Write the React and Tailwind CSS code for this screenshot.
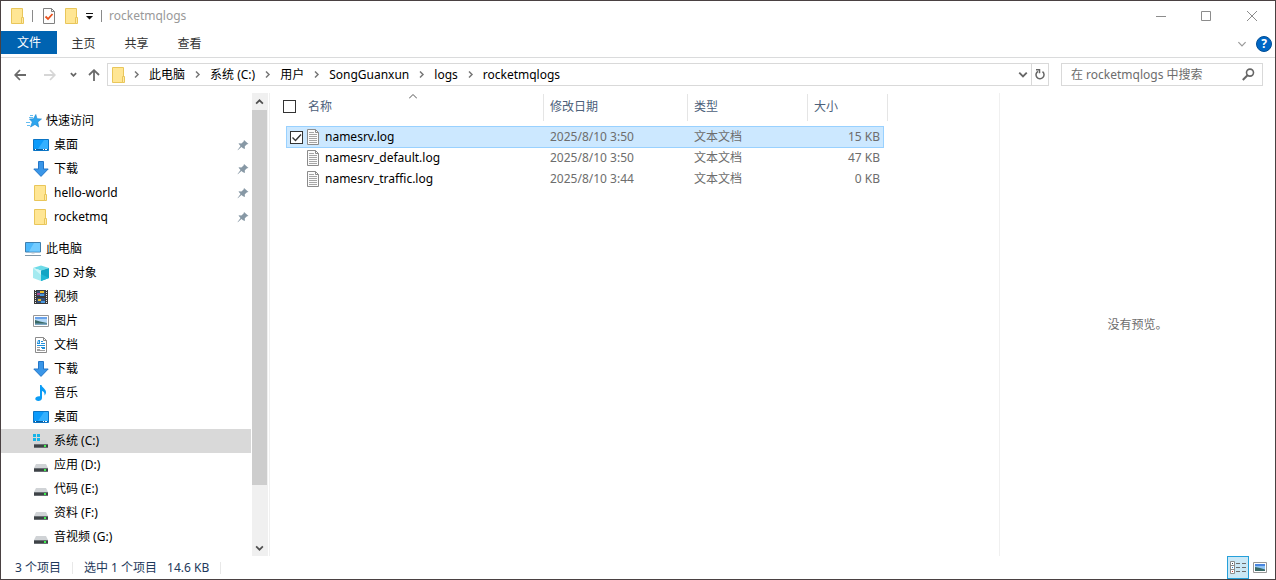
import React, { useState } from "react";
import clsx from "clsx";

const FolderIcon = () => (
    <svg className="w-4 h-4 shrink-0" viewBox="0 0 16 16" aria-hidden="true">
        <path d="M1.5 .5h11v15h-11z" fill="#ffe694" stroke="#e9c65a" />
        <path d="M11.5 9.5h2v6h-2z" fill="#ffeaa6" stroke="#e9c65a" />
    </svg>
);

const StarIcon = () => (
    <svg className="w-4 h-4 shrink-0" viewBox="0 0 16 16" aria-hidden="true">
        <path d="M9.800 1.500l1.200 4.200 4.500.3-3.700 3 .9 5-3.700-2.600-4.500 2.600 1.800-5L3.500 6l4-.2z" fill="#2ea5ee" stroke="#1a86d0" strokeWidth=".6" />
        <path d="M3 4.500h4M0 9.500h4M1 12.500h3M4 2.500h3" stroke="#65bdf0" />
    </svg>
);

const DesktopIcon = () => (
    <svg className="w-4 h-4 shrink-0" viewBox="0 0 16 16" aria-hidden="true">
        <path d="M.5 2.500h15v11H.5z" fill="#0c9bfb" stroke="#0b74c4" />
        <path d="M11 3h4v9H5z" fill="#33b0ff" />
        <path d="M1 12.500h14" stroke="#0b5c9c" />
        <path d="M2 12.500h1M10 12.500h1M12 12.500h2" stroke="#fff" />
    </svg>
);

const DownloadIcon = () => (
    <svg className="w-4 h-4 shrink-0" viewBox="0 0 16 16" aria-hidden="true">
        <path d="M5.500 .5h5v7.500h4.700L8 15.400.8 8h4.700z" fill="#3a96e8" stroke="#2376c8" />
    </svg>
);

const ComputerIcon = () => (
    <svg className="w-4 h-4 shrink-0" viewBox="0 0 16 16" aria-hidden="true">
        <path d="M.5 1.500h15v9.500H.5z" fill="#4cb8fc" stroke="#3f7fae" />
        <path d="M9 2h6v8.500H4z" fill="#72cbff" />
        <path d="M6.500 12h3" stroke="#b4c0c8" />
        <path d="M0 14.500h16" stroke="#8298a8" />
    </svg>
);

const CubeIcon = () => (
    <svg className="w-4 h-4 shrink-0" viewBox="0 0 16 16" aria-hidden="true">
        <path d="M0 3l8-2.600L16 3 8 5.600z" fill="#6edbe8" />
        <path d="M0 3l8 2.600V16l-8-3z" fill="#a4eaf0" />
        <path d="M0 3l8 2.600V10z" fill="#d0f6f8" />
        <path d="M16 3L8 5.600V16l8-3z" fill="#12a5c4" />
        <path d="M8 16V9l8 4z" fill="#1fb8d4" />
    </svg>
);

const VideoIcon = () => (
    <svg className="w-4 h-4 shrink-0" viewBox="0 0 16 16" aria-hidden="true">
        <path d="M1 1h14v14H1z" fill="#3a3a3a" />
        <path d="M2.500 1v14M13.500 1v14" stroke="#e6e6e6" strokeDasharray="1 1" />
        <path d="M4 2h8v5H4zM4 9h8v5H4z" fill="#33507c" />
        <path d="M7 2h4v2H7zM5 10h3v2H5z" fill="#e9bd2f" />
        <path d="M4 4h3v2H4z" fill="#b04a8c" />
        <path d="M7 5h4v2H7zM8 12h4v2H8z" fill="#4c9ae0" />
    </svg>
);

const PictureIcon = () => (
    <svg className="w-4 h-4 shrink-0" viewBox="0 0 16 16" aria-hidden="true">
        <path d="M.5 2.500h15v11H.5z" fill="#fff" stroke="#979797" />
        <path d="M2 4h12v8H2z" fill="#b4d8f7" />
        <path d="M2 4h12v2H2z" fill="#6ba3ea" />
        <path d="M2 7l5 1.500L14 10v1H2z" fill="#3a6a66" />
        <path d="M2 10.500h12V12H2z" fill="#7ba7c4" />
    </svg>
);

const DocumentIcon = () => (
    <svg className="w-4 h-4 shrink-0" viewBox="0 0 16 16" aria-hidden="true">
        <path d="M2.500 .5h8l3 3v12h-11z" fill="#fff" stroke="#8b8b8b" />
        <path d="M10.500 .5v3h3" fill="none" stroke="#8b8b8b" />
        <path d="M4 6.500h3M8 4.500h2M8 6.500h4M4 8.500h8M8 10.500h4M9 11.500h3" stroke="#1f90dc" />
        <path d="M5.500 3l-1 3.500M6.500 3v4" stroke="#1f90dc" />
        <path d="M4 10.500h3M4 12.500h3M4 13.500h8" stroke="#a0a0a0" />
    </svg>
);

const MusicIcon = () => (
    <svg className="w-4 h-4 shrink-0" viewBox="0 0 16 16" aria-hidden="true">
        <path d="M7 0h1.500c.4 2.600 4.500 4 4.500 7 0 1.500-.6 2.700-1.500 3.500.5-2.500-.8-4-2.500-4.600V13c0 1.800-1.700 3-3.700 3-1.800 0-3-.9-3-2.200C2.300 12 4.300 11 7 11.300z" fill="#0b9cf5" />
    </svg>
);

const DriveIcon = ({ system }) => (
    <svg className="w-4 h-4 shrink-0" viewBox="0 0 16 16" aria-hidden="true">
        <path d="M3 7h10l2 4H1z" fill="#d0d3d6" />
        <path d="M1 11h14v4H1z" fill="#3e4246" />
        <path d="M1 11.500h14M1 14.500h14" stroke="#6a6f74" />
        <path d="M11 12h2v2h-2z" fill="#3df04e" />
        {system && (
            <>
                <path d="M0 0h8v8H0z" fill="#d9d9d9" />
                <path d="M0 1h3v3H0zM4 1h3v3H4zM0 5h3v3H0zM4 5h3v3H4z" fill="#16b4e8" />
            </>
        )}
    </svg>
);

const TextFileIcon = () => (
    <svg className="w-4 h-4 shrink-0" viewBox="0 0 16 16" aria-hidden="true">
        <path d="M1.500 .5h8l3 3v12h-11z" fill="#fbfbfb" stroke="#8b8b8b" />
        <path d="M9.500 .5v3h3" fill="none" stroke="#8b8b8b" />
        <path d="M3 3.500h5M3 5.500h8M3 7.500h8M3 9.500h8M3 11.500h8M3 13.500h8" stroke="#a5a5a5" />
    </svg>
);

const PinIcon = () => (
    <svg className="w-3 h-3 shrink-0" viewBox="0 0 12 12" aria-hidden="true">
        <path d="M7 1l4.500 4-1.500.3-2.200 2 .1 2.700L6 9.200 4.400 7.900.8 11.300.6 10.900 3.500 7 2 5.300l-.4-1 2.800.2L6.600 2.400z" fill="#8798a5" />
    </svg>
);

const CheckDocIcon = () => (
    <svg className="w-4 h-4 shrink-0" viewBox="0 0 16 16" aria-hidden="true">
        <path d="M2.500 .5h8l3 3v12h-11z" fill="#fdfdfd" stroke="#808080" />
        <path d="M10.500 .5v3h3" fill="none" stroke="#808080" />
        <path d="M4.500 8.500l2.500 2.500 4.500-5" fill="none" stroke="#e8501c" strokeWidth="1.800" />
    </svg>
);

const Chevron = ({ className, d = "M1 1l3 3 3-3" }) => (
    <svg className={clsx("shrink-0", className)} viewBox="0 0 8 5" fill="none" stroke="currentColor" aria-hidden="true">
        <path d={d} />
    </svg>
);

// Square checkbox with a thin tick laid over the native input
const Checkbox = ({ label, className, ...props }) => (
    <span className={clsx("relative block w-[13px] h-[13px] shrink-0", className)}>
        <input type="checkbox" aria-label={label} className="peer block appearance-none w-full h-full border border-[#333] bg-white" {...props} />
        <svg className="absolute inset-0 hidden peer-checked:block pointer-events-none" viewBox="0 0 13 13" fill="none" stroke="#333" strokeWidth="1.400" aria-hidden="true">
            <path d="M2.500 6.500l3 3 5.500-6" />
        </svg>
    </span>
);

const quickAccess = [
    { name: "桌面", icon: <DesktopIcon /> },
    { name: "下载", icon: <DownloadIcon /> },
    { name: "hello-world", icon: <FolderIcon /> },
    { name: "rocketmq", icon: <FolderIcon /> },
];

const thisPC = [
    { name: "3D 对象", icon: <CubeIcon /> },
    { name: "视频", icon: <VideoIcon /> },
    { name: "图片", icon: <PictureIcon /> },
    { name: "文档", icon: <DocumentIcon /> },
    { name: "下载", icon: <DownloadIcon /> },
    { name: "音乐", icon: <MusicIcon /> },
    { name: "桌面", icon: <DesktopIcon /> },
    { name: "系统 (C:)", icon: <DriveIcon system />, active: true },
    { name: "应用 (D:)", icon: <DriveIcon /> },
    { name: "代码 (E:)", icon: <DriveIcon /> },
    { name: "资料 (F:)", icon: <DriveIcon /> },
    { name: "音视频 (G:)", icon: <DriveIcon /> },
];

const crumbs = ["此电脑", "系统 (C:)", "用户", "SongGuanxun", "logs", "rocketmqlogs"];

const files = [
    { name: "namesrv.log", date: "2025/8/10 3:50", type: "文本文档", size: "15 KB" },
    { name: "namesrv_default.log", date: "2025/8/10 3:50", type: "文本文档", size: "47 KB" },
    { name: "namesrv_traffic.log", date: "2025/8/10 3:44", type: "文本文档", size: "0 KB" },
];

const TitleBar = () => (
    <header className="flex items-center h-[30px] pl-[9px]">
        <FolderIcon />
        <span className="w-px h-3 ml-[6px] mr-2 bg-[#8a8a8a]" />
        <button aria-label="属性" className="mr-[7px]"><CheckDocIcon /></button>
        <button aria-label="新建文件夹" className="mr-[6px]"><FolderIcon /></button>
        <button aria-label="自定义快速访问工具栏">
            <svg className="w-[7px] h-[7px]" viewBox="0 0 7 7" aria-hidden="true">
                <path d="M0 0h7v1H0zM0 3h7L3.500 6.500z" fill="#111" />
            </svg>
        </button>
        <span className="w-px h-3 ml-2 mr-[7px] bg-[#8a8a8a]" />
        <h1 className="text-[#999]">rocketmqlogs</h1>
        <div className="flex items-center ml-auto text-[#8c8c8c]">
            <button aria-label="最小化" className="flex justify-center w-[45px]">
                <svg className="w-[10px] h-[10px]" viewBox="0 0 10 10" stroke="currentColor" aria-hidden="true"><path d="M0 5.500h10" /></svg>
            </button>
            <button aria-label="最大化" className="flex justify-center w-[45px]">
                <svg className="w-[10px] h-[10px]" viewBox="0 0 10 10" fill="none" stroke="currentColor" aria-hidden="true"><path d="M.5 .5h9v9h-9z" /></svg>
            </button>
            <button aria-label="关闭" className="flex justify-center w-[47px]">
                <svg className="w-[10px] h-[10px]" viewBox="0 0 10 10" stroke="currentColor" aria-hidden="true"><path d="M0 0l10 10M10 0L0 10" /></svg>
            </button>
        </div>
    </header>
);

const RibbonTabs = () => (
    <div className="flex items-start h-[27px] border-b border-[#dadbdc]">
        <button className="w-14 h-[23px] bg-[#0063b1] text-white">文件</button>
        <button className="w-[53px] h-[26px] text-[#333]">主页</button>
        <button className="w-[53px] h-[26px] text-[#333]">共享</button>
        <button className="w-[53px] h-[26px] text-[#333]">查看</button>
        <div className="flex items-center gap-[9px] h-[26px] ml-auto pr-[3px]">
            <button aria-label="展开功能区" className="text-[#999]"><Chevron className="w-[10px] h-[6px]" /></button>
            <button aria-label="帮助" className="flex items-center justify-center w-4 h-4 rounded-full bg-[#0067c5] border border-[#004e96] text-white text-[12px] leading-[14px] font-bold">?</button>
        </div>
    </div>
);

const AddressBar = () => (
    <div className="flex items-center h-[35px] pt-[5px] pb-[7px] pr-3">
        <div className="flex items-center pl-[13px] w-[106px] text-[#666]">
            <button aria-label="返回">
                <svg className="w-3 h-3" viewBox="0 0 12 12" fill="none" stroke="#6a6a6a" strokeWidth="1.800" aria-hidden="true"><path d="M12 6H1.500M6 1L1.200 6 6 11" /></svg>
            </button>
            <button aria-label="前进" className="ml-[18px]">
                <svg className="w-3 h-3" viewBox="0 0 12 12" fill="none" stroke="#d6d6d6" strokeWidth="1.800" aria-hidden="true"><path d="M0 6h10.500M6 1l4.800 5L6 11" /></svg>
            </button>
            <button aria-label="最近浏览的位置" className="ml-[14px]"><Chevron className="w-[7px] h-[5px] stroke-2" /></button>
            <button aria-label="上移" className="ml-[11px]">
                <svg className="w-3 h-3" viewBox="0 0 12 12" fill="none" stroke="#6a6a6a" strokeWidth="1.800" aria-hidden="true"><path d="M6 12V1.500M1 6l5-4.800L11 6" /></svg>
            </button>
        </div>
        <div className="flex flex-1 h-[23px] border border-[#d9d9d9]">
            <nav aria-label="地址" className="flex flex-1 items-center pl-[3px]">
                <FolderIcon />
                <ol className="flex items-center -ml-[3px]">
                    {crumbs.map((crumb) => (
                        <li key={crumb} className="flex items-center">
                            <svg className="w-[25px] h-[7px] text-[#777]" viewBox="0 0 25 7" fill="none" stroke="currentColor" strokeWidth="1.500" aria-hidden="true"><path d="M11 .5l3 3-3 3" /></svg>
                            <a href="#" className="text-black">{crumb}</a>
                        </li>
                    ))}
                </ol>
            </nav>
            <button aria-label="以前的位置" className="w-4 text-[#666]"><Chevron className="w-[10px] h-[7px] mx-auto stroke-[1.500]" /></button>
            <button aria-label="刷新" className="w-[17px] border-l border-[#d9d9d9]">
                <svg className="w-[10px] h-[11px] mx-auto" viewBox="0 0 10 11" fill="none" stroke="#666" strokeWidth="1.500" aria-hidden="true">
                    <path d="M7.500 2.600A4 4 0 1 1 3 2.300" /><path d="M1 .8h3.500v3.500" />
                </svg>
            </button>
        </div>
        <label className="flex items-center w-[202px] h-[23px] ml-3 pl-[9px] pr-[7px] border border-[#d9d9d9]">
            <input type="text" aria-label="搜索" placeholder="在 rocketmqlogs 中搜索" className="flex-1 min-w-0 outline-none placeholder:text-[#6d6d6d]" />
            <svg className="w-[13px] h-[13px]" viewBox="0 0 13 13" fill="none" stroke="#666" strokeWidth="1.600" aria-hidden="true">
                <circle cx="8" cy="4.600" r="3.500" /><path d="M5.500 7.200L.8 12" strokeWidth="2" />
            </svg>
        </label>
    </div>
);

const NavItem = ({ item, pinned }) => (
    <li>
        <a href="#" className={clsx("flex items-center h-6 pl-8 pr-[2px] text-black", item.active && "bg-[#d9d9d9]")}>
            {item.icon}
            <span className="flex-1 ml-[5px]">{item.name}</span>
            {pinned && <PinIcon />}
        </a>
    </li>
);

const Sidebar = () => (
    <aside className="flex w-[267px] shrink-0">
        <nav aria-label="导航窗格" className="flex-1 pt-4 mr-px">
            <a href="#" className="flex items-center gap-1 h-6 pl-[25px] text-black"><StarIcon />快速访问</a>
            <ul>
                {quickAccess.map((item) => <NavItem key={item.name} item={item} pinned />)}
            </ul>
            <a href="#" className="flex items-center gap-[5px] h-6 mt-2 pl-6 text-black"><ComputerIcon />此电脑</a>
            <ul>
                {thisPC.map((item) => <NavItem key={item.name} item={item} />)}
            </ul>
        </nav>
        <div className="flex flex-col w-4 pr-px bg-[#f0f0f0] text-[#505050]">
            <button aria-label="向上滚动" className="flex items-center justify-center h-[17px]"><Chevron className="w-[9px] h-[6px] stroke-[1.500]" d="M1 4l3-3 3 3" /></button>
            <div className="flex-1">
                <div className="h-[87.500%] bg-[#cdcdcd]" />
            </div>
            <button aria-label="向下滚动" className="flex items-center justify-center h-[17px]"><Chevron className="w-[9px] h-[6px] stroke-[1.500]" /></button>
        </div>
    </aside>
);

const FileList = () => {
    const [selected, setSelected] = useState(["namesrv.log"]);

    const toggle = (name) => {
        setSelected(selected.includes(name) ? selected.filter((n) => n !== name) : [...selected, name]);
    };

    const headCell = "flex items-center h-[27px] pb-px border-r border-[#e5e5e5]";

    return (
        <main className="flex-1 min-w-0 ml-px pl-[13px] border-l border-[#f0f0f0]">
            <table className="table-fixed w-[605px] border-collapse text-left">
                <thead>
                    <tr className="h-7 text-[#4c607a]">
                        <th className="w-[261px] p-0 font-normal">
                            <div className={clsx(headCell, "relative")}>
                                <Checkbox label="全选" />
                                <span className="ml-3">名称</span>
                                <Chevron className="absolute top-0 left-[126px] w-2 h-[5px] text-[#555]" d="M0 4.500l4-4 4 4" />
                            </div>
                        </th>
                        <th className="w-36 p-0 font-normal"><div className={clsx(headCell, "pl-[6px]")}>修改日期</div></th>
                        <th className="w-[120px] p-0 font-normal"><div className={clsx(headCell, "pl-[6px]")}>类型</div></th>
                        <th className="w-20 p-0 font-normal"><div className={clsx(headCell, "pl-[6px]")}>大小</div></th>
                    </tr>
                    <tr className="h-[5px]" />
                </thead>
                <tbody className="text-[#6d6d6d]">
                    {files.map((file) => {
                        const isSelected = selected.includes(file.name);
                        const cell = clsx("flex items-center", isSelected ? "h-[22px] bg-[#cce8ff] border-y border-[#99d1ff]" : "h-[21px] pb-px");
                        return (
                            <tr key={file.name}>
                                <td className="p-0 pl-[3px]">
                                    <div className={clsx(cell, "text-black", isSelected ? "border-l pl-[3px]" : "pl-1")}>
                                        <Checkbox
                                            label={file.name}
                                            checked={isSelected}
                                            onChange={() => toggle(file.name)}
                                            className={isSelected ? "" : "opacity-0"}
                                        />
                                        <span className="flex items-center gap-[3px] ml-[3px]"><TextFileIcon />{file.name}</span>
                                    </div>
                                </td>
                                <td className="p-0"><div className={clsx(cell, "pl-[6px]")}>{file.date}</div></td>
                                <td className="p-0"><div className={clsx(cell, "pl-[6px]")}>{file.type}</div></td>
                                <td className="p-0 pr-1"><div className={clsx(cell, "justify-end", isSelected ? "border-r pr-[3px]" : "pr-1")}>{file.size}</div></td>
                            </tr>
                        );
                    })}
                </tbody>
            </table>
        </main>
    );
};

const StatusBar = () => (
    <footer className="flex items-center h-[23px] pl-[14px] pr-2 text-[#1e395b]">
        <span>3 个项目</span>
        <span className="w-px h-3 mx-[11px] bg-[#e8e8e8]" />
        <span>选中 1 个项目</span>
        <span className="ml-[10px]">14.6 KB</span>
        <span className="w-px h-3 ml-[11px] bg-[#e8e8e8]" />
        <div className="flex items-center gap-1 ml-auto">
            <button aria-label="详细信息" className="flex items-center justify-center w-[22px] h-[23px] bg-[#cbe8f6] border border-[#26a0da]">
                <svg className="w-4 h-[13px]" viewBox="0 0 16 13" aria-hidden="true">
                    <path d="M.5 .5h4v12h-4zM.5 4.500h4M.5 8.500h4" fill="#fff" stroke="#8b8b8b" />
                    <path d="M6 2.500h4M12 2.500h4M6 6.500h4M12 6.500h4M6 10.500h4M12 10.500h4" stroke="#6d6d6d" />
                    <path d="M2 2h1v1H2z" fill="#345" /><path d="M2 6h1v1H2z" fill="#27c" /><path d="M2 10h1v1H2z" fill="#c33" />
                </svg>
            </button>
            <button aria-label="大缩略图">
                <svg className="w-[14px] h-[11px]" viewBox="0 0 14 11" aria-hidden="true">
                    <path d="M.5 .5h13v10H.5z" fill="#fff" stroke="#979797" />
                    <path d="M2 2h10v7H2z" fill="#8fc3f3" /><path d="M2 2h10v2H2z" fill="#4a86e0" />
                    <path d="M2 5l5 1 5 1.500V9H2z" fill="#3a6a66" />
                </svg>
            </button>
        </div>
    </footer>
);

export default function App() {
    return (
        <div className="flex flex-col min-h-screen bg-white border border-[#4a4142] font-['Noto_Sans','Noto_Sans_CJK_SC',sans-serif] text-[12px] leading-4">
            <TitleBar />
            <RibbonTabs />
            <AddressBar />
            <div className="flex flex-1">
                <Sidebar />
                <FileList />
                <section aria-label="预览" className="flex items-center justify-center w-[276px] border-l border-[#f0f0f0] text-[#6d6d6d]">
                    没有预览。
                </section>
            </div>
            <StatusBar />
        </div>
    );
}
